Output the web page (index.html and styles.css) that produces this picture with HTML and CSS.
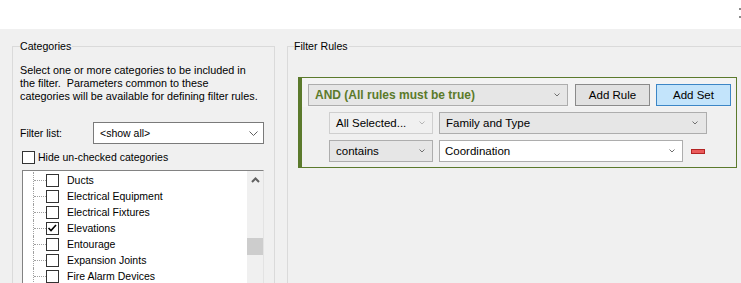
FILE: index.html
```html
<!DOCTYPE html>
<html>
<head>
<meta charset="utf-8">
<link rel="stylesheet" href="styles.css">
</head>
<body>
<div class="topbar"><span class="grip"><i></i><i></i></span></div>
<div class="main">
  <fieldset class="group cats">
    <legend>Categories</legend>
    <p class="desc">Select one or more categories to be included in<br>the filter.&nbsp; Parameters common to these<br>categories will be available for defining filter rules.</p>
    <div class="filter-row">
      <span class="label">Filter list:</span>
      <div class="combo-white"><span>&lt;show all&gt;</span><svg class="chev-lg" width="9" height="5" viewBox="0 0 9 5"><polyline points="0.5,0.5 4.5,4.5 8.5,0.5" fill="none" stroke="#606060" stroke-width="1"/></svg></div>
    </div>
    <div class="hide-row"><span class="cb"></span><span>Hide un-checked categories</span></div>
    <div class="tree">
      <ul class="items">
        <li><span class="branch"></span><span class="cb"></span><span class="txt">Ducts</span></li>
        <li><span class="branch"></span><span class="cb"></span><span class="txt">Electrical Equipment</span></li>
        <li><span class="branch"></span><span class="cb"></span><span class="txt">Electrical Fixtures</span></li>
        <li><span class="branch"></span><span class="cb"><svg width="11" height="11" viewBox="0 0 11 11"><polyline points="1.5,5 4,7.5 9,2" fill="none" stroke="#000" stroke-width="1.6"/></svg></span><span class="txt">Elevations</span></li>
        <li><span class="branch"></span><span class="cb"></span><span class="txt">Entourage</span></li>
        <li><span class="branch"></span><span class="cb"></span><span class="txt">Expansion Joints</span></li>
        <li><span class="branch"></span><span class="cb"></span><span class="txt">Fire Alarm Devices</span></li>
      </ul>
      <div class="vscroll">
        <div class="arrow"><svg width="9" height="6" viewBox="0 0 9 6"><polyline points="1,5 4.5,1.5 8,5" fill="none" stroke="#606060" stroke-width="2"/></svg></div>
        <div class="thumb"></div>
      </div>
    </div>
  </fieldset>
  <fieldset class="group rules">
    <legend>Filter Rules</legend>
    <div class="set">
      <div class="set-head">
        <div class="combo and"><span>AND (All rules must be true)</span><svg width="6" height="4" viewBox="0 0 6 4"><polyline points="0.5,0.5 3,3 5.5,0.5" fill="none" stroke="#707070" stroke-width="1"/></svg></div>
        <div class="btn rule-btn">Add Rule</div>
        <div class="btn set-btn">Add Set</div>
      </div>
      <div class="rule-rows">
        <div class="rule-row">
          <div class="combo sm disabled"><span>All Selected...</span><svg width="6" height="4" viewBox="0 0 6 4"><polyline points="0.5,0.5 3,3 5.5,0.5" fill="none" stroke="#b5b5b5" stroke-width="1"/></svg></div>
          <div class="combo md"><span>Family and Type</span><svg width="6" height="4" viewBox="0 0 6 4"><polyline points="0.5,0.5 3,3 5.5,0.5" fill="none" stroke="#707070" stroke-width="1"/></svg></div>
        </div>
        <div class="rule-row">
          <div class="combo sm"><span>contains</span><svg width="6" height="4" viewBox="0 0 6 4"><polyline points="0.5,0.5 3,3 5.5,0.5" fill="none" stroke="#707070" stroke-width="1"/></svg></div>
          <div class="combo coord"><span>Coordination</span><svg width="6" height="4" viewBox="0 0 6 4"><polyline points="0.5,0.5 3,3 5.5,0.5" fill="none" stroke="#707070" stroke-width="1"/></svg></div>
          <span class="minus"></span>
        </div>
      </div>
    </div>
  </fieldset>
</div>
</body>
</html>
```
FILE: styles.css
```css
html, body {
  margin: 0;
  padding: 0;
}
body {
  width: 741px;
  height: 283px;
  overflow: hidden;
  background: #f0f0f0;
  font-family: "Liberation Sans", Arial, sans-serif;
  color: #000;
}
.topbar {
  height: 29px;
  background: #fff;
  display: flex;
  justify-content: flex-end;
}
.grip {
  display: flex;
  flex-direction: column;
  gap: 6px;
  padding-top: 8px;
}
.grip i {
  display: block;
  width: 2px;
  height: 2px;
  background: #8c8c8c;
}
.main {
  display: flex;
  align-items: flex-start;
  gap: 12px;
  padding: 10px 0 0 12px;
}
.group {
  margin: 0;
  border: 1px solid #dadada;
  border-bottom: 0;
  min-width: 0;
  box-sizing: border-box;
  height: 244px;
  flex: none;
}
.group legend {
  padding: 0 1px 0 0;
  font-size: 10.6px;
  line-height: 14px;
}
.cats {
  width: 263px;
  padding: 11px 10px 0 7px;
}
.rules {
  width: 460px;
  border-right: 0;
  padding: 24px 0 0 6px;
}
.desc {
  margin: 0;
  font-size: 10.8px;
  line-height: 13px;
}
.filter-row {
  display: flex;
  align-items: center;
  margin-top: 19px;
  font-size: 10.5px;
}
.label {
  width: 73px;
}
.combo-white {
  width: 171px;
  height: 22px;
  box-sizing: border-box;
  border: 1px solid #7a7a7a;
  background: #fff;
  display: flex;
  align-items: center;
  justify-content: space-between;
  padding: 0 5px 0 6px;
}
.hide-row {
  display: flex;
  align-items: center;
  gap: 3px;
  height: 16px;
  margin: 5px 0 0 2px;
  font-size: 10.5px;
}
.cb {
  width: 13px;
  height: 13px;
  box-sizing: border-box;
  border: 1px solid #333;
  background: #fff;
  flex: none;
  display: flex;
  align-items: center;
  justify-content: center;
}
.tree {
  margin: 5px 0 0 2px;
  width: 242px;
  height: 113px;
  box-sizing: border-box;
  border: 1px solid;
  border-bottom: 0;
  border-color: #828282 #e3e3e3 #e3e3e3 #828282;
  background: #fff;
  display: flex;
}
.items {
  flex: 1;
  list-style: none;
  margin: 0;
  padding: 1px 0 0 10px;
  font-size: 10.5px;
}
.items li {
  display: flex;
  align-items: center;
  height: 16px;
}
.branch {
  align-self: stretch;
  width: 13px;
  box-sizing: border-box;
  border-left: 1px dotted #a0a0a0;
  position: relative;
  flex: none;
}
.branch::after {
  content: "";
  position: absolute;
  left: 0;
  top: 8px;
  width: 12px;
  border-top: 1px dotted #a0a0a0;
}
.txt {
  margin-left: 8px;
}
.vscroll {
  width: 16px;
  background: #f0f0f0;
  display: flex;
  flex-direction: column;
  flex: none;
}
.arrow {
  height: 17px;
  display: flex;
  align-items: center;
  justify-content: center;
}
.thumb {
  margin-top: 50px;
  height: 17px;
  background: #cdcdcd;
}
.set {
  margin-left: 4px;
  width: 439px;
  box-sizing: border-box;
  border: 1px solid #5b7a2c;
  border-left-width: 4px;
  padding: 0 2px 5px 0;
}
.set-head {
  display: flex;
  align-items: center;
  padding: 6px 3px 1px 6px;
  background: #f3f3f3;
}
.combo {
  height: 22px;
  box-sizing: border-box;
  border: 1px solid #adadad;
  background: #e6e6e6;
  display: flex;
  align-items: center;
  justify-content: space-between;
  padding: 0 7px 0 6px;
  font-size: 11.5px;
  flex: none;
}
.and {
  width: 260px;
  color: #5b7a2a;
  font-weight: bold;
  font-size: 12px;
  padding-left: 6px;
}
.btn {
  width: 75px;
  height: 22px;
  box-sizing: border-box;
  display: flex;
  align-items: center;
  justify-content: center;
  font-size: 11.5px;
  flex: none;
}
.rule-btn {
  margin-left: 7px;
  border: 1px solid #8a8a8a;
  background: #e1e1e1;
}
.set-btn {
  margin-left: 6px;
  border: 1px solid #3c86c6;
  background: #c3e4fb;
}
.rule-rows {
  padding-left: 27px;
  margin-top: 5px;
  display: flex;
  flex-direction: column;
  gap: 6px;
}
.rule-row {
  display: flex;
  align-items: center;
  gap: 6px;
}
.sm {
  width: 104px;
}
.md {
  width: 268px;
  padding-right: 8px;
}
.coord {
  width: 244px;
  background: #fff;
  padding-left: 5px;
}
.disabled {
  background: #f0f0f0;
  border-color: #cfcfcf;
}
.minus {
  margin-left: 2px;
  width: 14px;
  height: 5px;
  box-sizing: border-box;
  background: #ea5a5a;
  border: 1px solid #b32424;
  flex: none;
}
```
